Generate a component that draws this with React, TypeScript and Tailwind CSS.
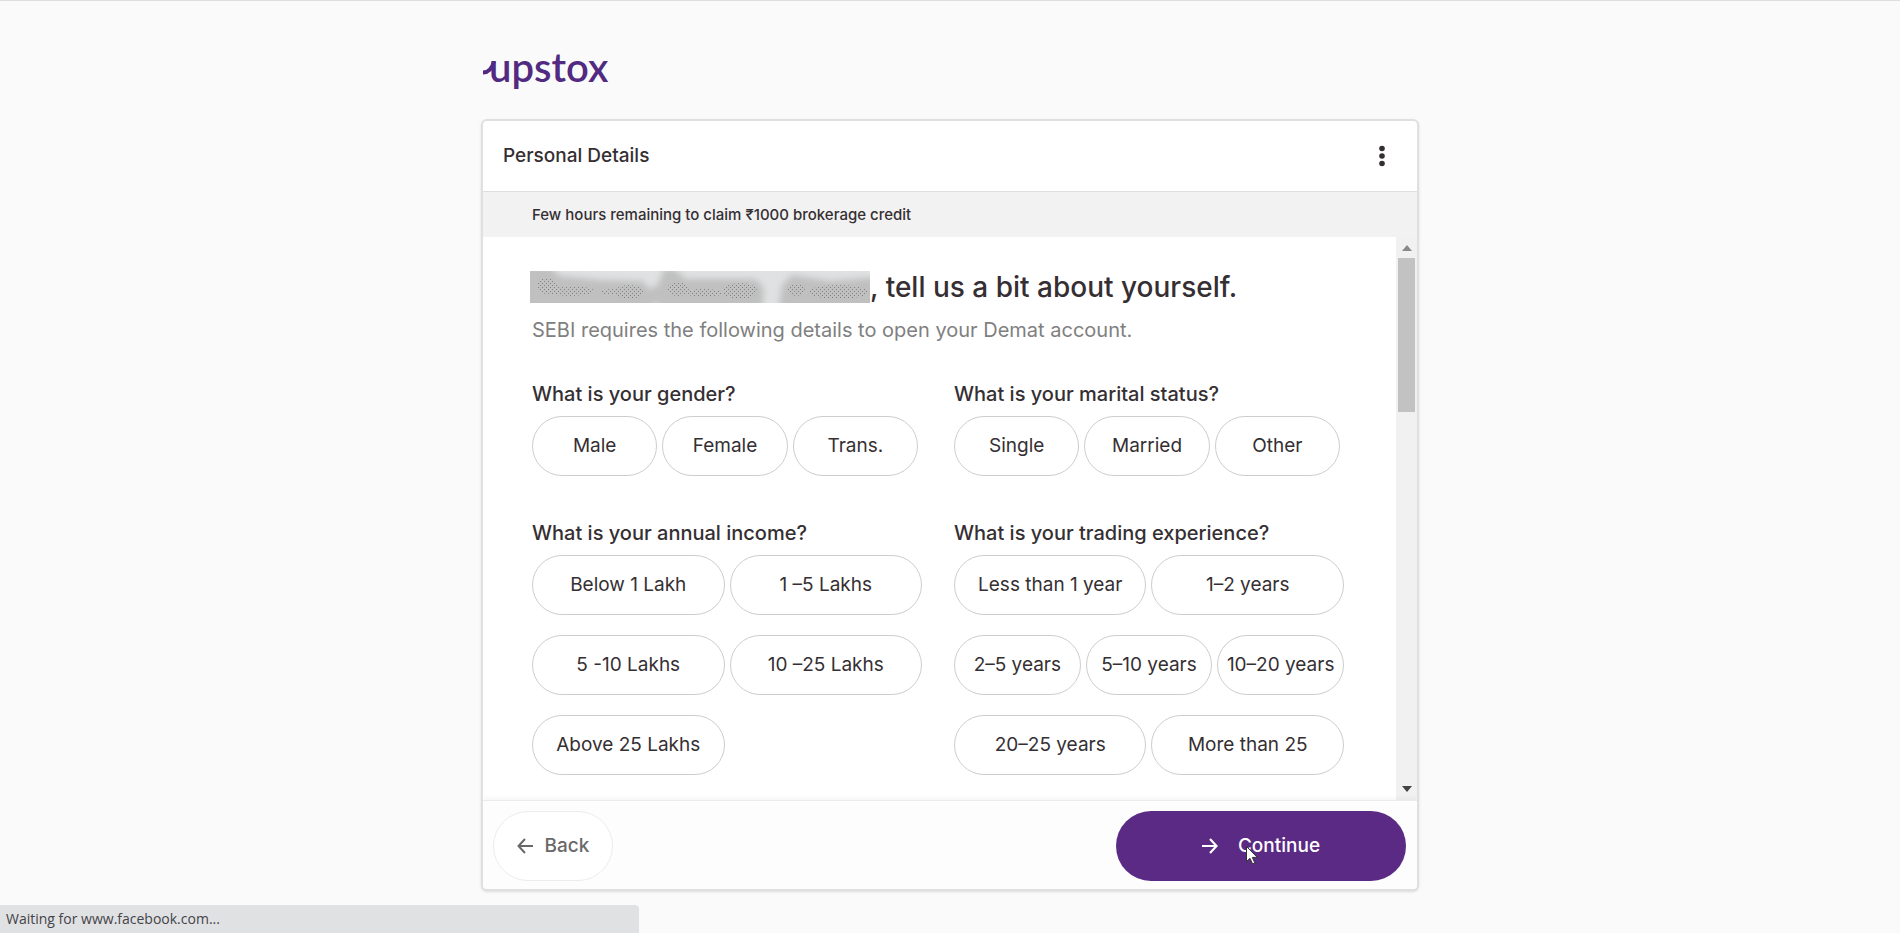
import React from 'react';

interface Option {
    label: string;
    wide?: boolean;
}

interface Question {
    id: string;
    title: string;
    narrow?: boolean;
    options: Option[];
}

const QUESTIONS: Question[] = [
    {
        id: 'gender',
        title: 'What is your gender?',
        narrow: true,
        options: [{ label: 'Male' }, { label: 'Female' }, { label: 'Trans.' }],
    },
    {
        id: 'marital',
        title: 'What is your marital status?',
        narrow: true,
        options: [{ label: 'Single' }, { label: 'Married' }, { label: 'Other' }],
    },
    {
        id: 'income',
        title: 'What is your annual income?',
        options: [
            { label: 'Below 1 Lakh', wide: true },
            { label: '1 –5 Lakhs', wide: true },
            { label: '5 -10 Lakhs', wide: true },
            { label: '10 –25 Lakhs', wide: true },
            { label: 'Above 25 Lakhs', wide: true },
        ],
    },
    {
        id: 'experience',
        title: 'What is your trading experience?',
        options: [
            { label: 'Less than 1 year', wide: true },
            { label: '1–2 years', wide: true },
            { label: '2–5 years' },
            { label: '5–10 years' },
            { label: '10–20 years' },
            { label: '20–25 years', wide: true },
            { label: 'More than 25', wide: true },
        ],
    },
];

const Logo = () => (
    <a href="#" aria-label="upstox" className="relative block w-fit pl-2 font-[Lato,sans-serif] text-[40px] font-semibold leading-[44px] text-[#522a82]">
        <svg className="absolute left-0 top-[15px]" width="16" height="16" viewBox="0 0 16 16" fill="none" stroke="currentColor" strokeWidth="4">
            <path d="M2 12.500C7 12.500 11 9 13 1.500" />
        </svg>
        upstox
    </a>
);

// Applicant name, masked out
const MaskedName = () => (
    <svg className="h-8 w-[340px] shrink-0" viewBox="0 0 340 32" role="img" aria-label="Name hidden">
        <defs>
            <filter id="smudge" x="-10%" y="-50%" width="120%" height="200%">
                <feGaussianBlur stdDeviation="3" />
            </filter>
            <pattern id="grain" width="4" height="4" patternUnits="userSpaceOnUse">
                <path d="M0 0h1v1H0zM2 2h1v1H2z" fill="#808080" />
            </pattern>
            <clipPath id="nameBox">
                <rect width="340" height="32" />
            </clipPath>
        </defs>
        <g clipPath="url(#nameBox)">
            <rect width="340" height="32" fill="#dfe1e2" />
            <g filter="url(#smudge)" fill="#c0c0c0">
                <path d="M-8 -4H20L30 5 70 9 112 10 120 18 128 14 134 -2H144L156 8 226 8 234 18 232 44H248L252 14 262 4 300 10 350 6V44H132L126 30 118 44H-8z" />
            </g>
            <g fill="url(#grain)">
                <ellipse cx="17" cy="15" rx="10" ry="8" />
                <ellipse cx="40" cy="20" rx="24" ry="5" />
                <ellipse cx="99" cy="21" rx="14" ry="7" />
                <ellipse cx="82" cy="21" rx="12" ry="3" />
                <ellipse cx="148" cy="18" rx="11" ry="7" />
                <ellipse cx="174" cy="22" rx="18" ry="4" />
                <ellipse cx="210" cy="20" rx="17" ry="8" />
                <ellipse cx="266" cy="19" rx="9" ry="6" />
                <ellipse cx="308" cy="21" rx="30" ry="7" />
            </g>
        </g>
    </svg>
);

const QuestionBlock: React.FC<{ question: Question }> = ({ question }) => {
    const [selected, setSelected] = React.useState('');

    return (
        <section aria-labelledby={question.id}>
            <h2 id={question.id} className="mb-[9px] text-[20px] font-medium leading-[26px]">{question.title}</h2>
            <div className={`grid grid-cols-6 gap-x-[5px] gap-y-5 ${question.narrow ? 'pr-1' : ''}`}>
                {question.options.map(option => (
                    <button
                        key={option.label}
                        type="button"
                        aria-pressed={selected === option.label}
                        onClick={() => setSelected(option.label)}
                        className={`h-[60px] whitespace-nowrap rounded-full border text-[19px] ${
                            option.wide ? 'col-span-3' : 'col-span-2'
                        } ${selected === option.label ? 'border-[#5a2a84] text-[#5a2a84]' : 'border-[#cdcdcd]'}`}
                    >
                        {option.label}
                    </button>
                ))}
            </div>
        </section>
    );
};

const ScrollTrack = () => (
    <div className="flex w-[21px] shrink-0 flex-col items-center bg-[#f1f1f1]" aria-hidden="true">
        <svg className="my-[7px] h-[7px] w-[10px]" viewBox="0 0 10 7">
            <path d="M0 7 5 1l5 6z" fill="#8a8a8a" />
        </svg>
        <div className="h-[154px] w-[17px] bg-[#c2c2c2]" />
        <svg className="mb-2 mt-auto h-[6px] w-[10px]" viewBox="0 0 10 6">
            <path d="M0 0h10L5 6z" fill="#444" />
        </svg>
    </div>
);

export default function App() {
    return (
        <div className="min-h-screen border-t border-[#dedede] bg-[#fafafa] font-[Inter,sans-serif] text-[#352f33]">
            <div className="mx-auto max-w-[938px] pt-[44px]">
                <Logo />

                <main className="mt-[30px] overflow-hidden rounded-md border-2 border-[#e0e0e0] bg-white shadow-sm">
                    <header className="flex items-center justify-between border-b border-[#dfdfdf] px-5 py-[22px]">
                        <h1 className="text-[19px] font-medium leading-[26px]">Personal Details</h1>
                        <button type="button" aria-label="More options" className="px-3">
                            <svg className="h-[22px] w-[6px]" viewBox="0 0 6 22" fill="currentColor">
                                <circle cx="3" cy="3.500" r="2.8" />
                                <circle cx="3" cy="11" r="2.8" />
                                <circle cx="3" cy="18.500" r="2.8" />
                            </svg>
                        </button>
                    </header>
                    <p className="bg-[#f2f2f2] px-[49px] pb-[11px] pt-3 text-[15px] font-medium leading-[22px]">
                        Few hours remaining to claim ₹1000 brokerage credit
                    </p>

                    <div className="flex">
                        <div className="min-w-0 flex-1 pb-[25px] pl-[49px] pr-[52px] pt-8">
                            <div className="-ml-0.5 flex items-center text-[28px] font-medium leading-9">
                                <MaskedName />
                                <span className="whitespace-nowrap">, tell us a bit about yourself.</span>
                            </div>
                            <p className="mt-3 text-[20px] leading-[26px] text-[#808080]">
                                SEBI requires the following details to open your Demat account.
                            </p>
                            <div className="mt-[38px] grid grid-cols-2 gap-x-8 gap-y-11">
                                {QUESTIONS.map(question => (
                                    <QuestionBlock key={question.id} question={question} />
                                ))}
                            </div>
                        </div>
                        <ScrollTrack />
                    </div>

                    <footer className="relative flex justify-between border-t border-[#ebebeb] bg-[#fdfdfd] pb-2 pl-[10px] pr-[11px] pt-[10px] text-[19px] font-medium shadow-[0_-3px_4px_rgba(0,0,0,0.03)]">
                        <button type="button" className="flex h-[70px] w-[120px] items-center justify-center gap-3 rounded-full border border-[#ececec] bg-white text-[#6b686a]">
                            <svg className="h-4 w-4" viewBox="0 0 16 16" fill="none" stroke="currentColor" strokeWidth="2">
                                <path d="M8 1 1.500 8 8 15M1.500 8H16" />
                            </svg>
                            Back
                        </button>
                        <button type="button" className="relative flex h-[70px] w-[290px] items-center justify-center gap-5 rounded-full bg-[#5a2a84] text-white">
                            <svg className="h-4 w-4" viewBox="0 0 16 16" fill="none" stroke="currentColor" strokeWidth="2.200">
                                <path d="M8 1l6.500 7L8 15M14.500 8H0" />
                            </svg>
                            Continue
                            <svg className="absolute left-[130px] top-[35px]" width="12" height="19" viewBox="0 0 12 19">
                                <path d="M.5.500v15l3.500-3.200 2.600 5.700 2.300-1-2.600-5.600h5z" fill="#fff" stroke="#333" />
                            </svg>
                        </button>
                    </footer>
                </main>
            </div>

            <div role="status" className="fixed bottom-0 left-0 h-7 w-[639px] max-w-full rounded-tr bg-[#dfe1e2] px-1.5 font-['Open_Sans',sans-serif] text-[14px] leading-7 text-[#45434a]">
                Waiting for www.facebook.com...
            </div>
        </div>
    );
}
